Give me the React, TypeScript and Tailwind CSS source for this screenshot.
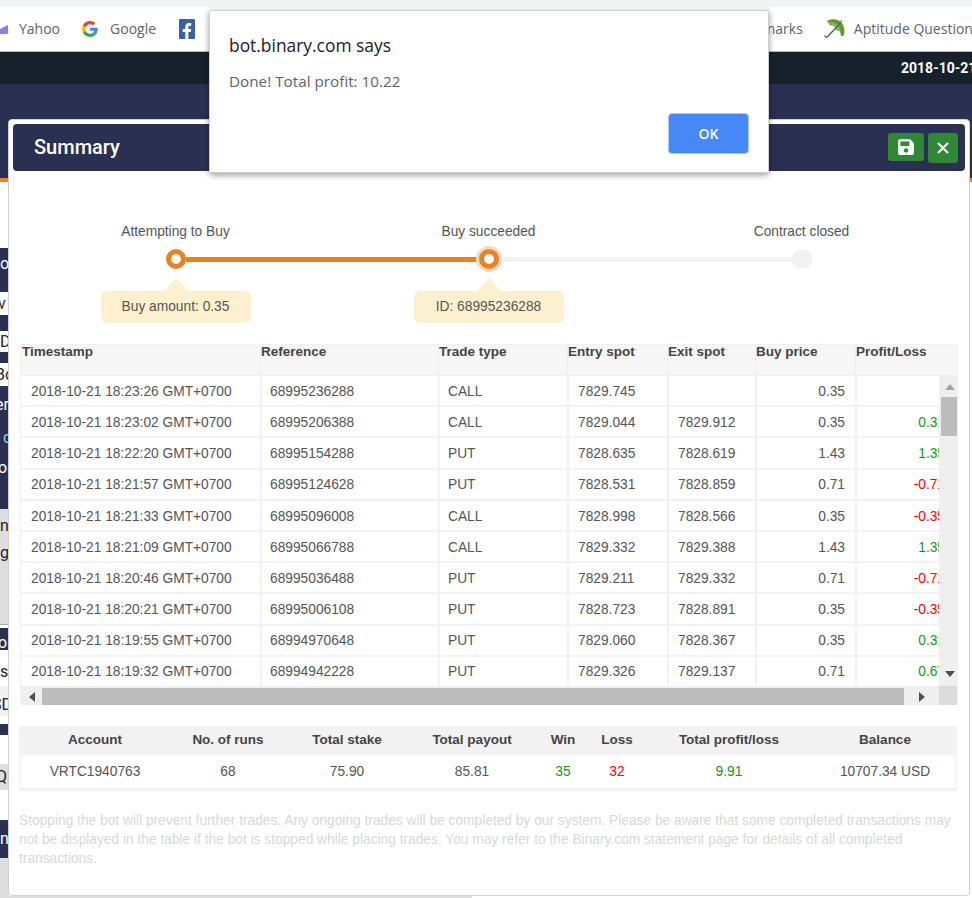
import React from "react";
import { FaSave, FaFacebookF } from "react-icons/fa";

const ROW_COLS = "grid grid-cols-[239px_178px_129px_100px_88px_100px_100px]";
const SUMMARY_COLS = "grid grid-cols-[150px_116px_122px_128px_54px_54px_170px_142px]";

type Trade = [string, string, string, string, string, string, string];

const trades: Trade[] = [
  ["2018-10-21 18:23:26 GMT+0700", "68995236288", "CALL", "7829.745", "", "0.35", ""],
  ["2018-10-21 18:23:02 GMT+0700", "68995206388", "CALL", "7829.044", "7829.912", "0.35", "0.31"],
  ["2018-10-21 18:22:20 GMT+0700", "68995154288", "PUT", "7828.635", "7828.619", "1.43", "1.35"],
  ["2018-10-21 18:21:57 GMT+0700", "68995124628", "PUT", "7828.531", "7828.859", "0.71", "-0.71"],
  ["2018-10-21 18:21:33 GMT+0700", "68995096008", "CALL", "7828.998", "7828.566", "0.35", "-0.35"],
  ["2018-10-21 18:21:09 GMT+0700", "68995066788", "CALL", "7829.332", "7829.388", "1.43", "1.35"],
  ["2018-10-21 18:20:46 GMT+0700", "68995036488", "PUT", "7829.211", "7829.332", "0.71", "-0.71"],
  ["2018-10-21 18:20:21 GMT+0700", "68995006108", "PUT", "7828.723", "7828.891", "0.35", "-0.35"],
  ["2018-10-21 18:19:55 GMT+0700", "68994970648", "PUT", "7829.060", "7828.367", "0.35", "0.31"],
  ["2018-10-21 18:19:32 GMT+0700", "68994942228", "PUT", "7829.326", "7829.137", "0.71", "0.67"],
];

const headers = ["Timestamp", "Reference", "Trade type", "Entry spot", "Exit spot", "Buy price", "Profit/Loss"];

// slices of the page that stick out left of the dialog
const strip: { h: string; bg: string; text?: React.ReactNode; color?: string; extra?: string }[] = [
  { h: "h-[66px]", bg: "bg-white" },
  { h: "h-[44px]", bg: "bg-[#2a3052]", text: "o", color: "text-white", extra: "pb-[12px]" },
  { h: "h-[23px]", bg: "bg-white", text: "v", color: "text-[#333]", extra: "-ml-[2px]" },
  { h: "h-[16px]", bg: "bg-[#2a3052]" },
  { h: "h-[21px]", bg: "bg-white", text: "D", color: "text-[#222]" },
  { h: "h-[11px]", bg: "bg-[#2a3052]" },
  { h: "h-[23px]", bg: "bg-white", text: "Bc", color: "text-[#222]", extra: "-ml-[5px]" },
  { h: "h-[38px]", bg: "bg-[#2a3052]", text: "er", color: "text-white", extra: "-ml-[5px]" },
  {
    h: "h-[28px]",
    bg: "bg-[#2a3052]",
    text: (
      <>
        <span className="w-[3px] h-[8px] bg-[#e98024]" />
        <span className="ml-[3px] text-[#8fd0f5]">c</span>
      </>
    ),
  },
  { h: "h-[57px]", bg: "bg-[#2a3052]", text: "or", color: "text-white", extra: "-ml-[2px] pb-[25px]" },
  { h: "h-[29px]", bg: "bg-[#dedede]", text: "n", color: "text-[#222]", extra: "pt-[4px]" },
  { h: "h-[28px]", bg: "bg-[#dedede]", text: "ge", color: "text-[#222]", extra: "pt-[2px]" },
  { h: "h-[58px]", bg: "bg-[#dedede]" },
  { h: "h-[4px]", bg: "bg-white border-t border-t-[#aaaaaa]" },
  { h: "h-[22px]", bg: "bg-[#2a3052]", text: "or", color: "text-white", extra: "-ml-[2px] pt-[8px]" },
  { h: "h-[36px]", bg: "bg-white", text: "s", color: "text-[#222]", extra: "pt-[8px]" },
  { h: "h-[30px]", bg: "bg-[#f1f1f1]", text: "SD", color: "text-[#222]", extra: "-ml-[8px] pt-[8px]" },
  { h: "h-[8px]", bg: "bg-white" },
  { h: "h-[11px]", bg: "bg-[#2a3052]" },
  { h: "h-[29px]", bg: "bg-white" },
  { h: "h-[26px]", bg: "bg-[#dedede]", text: "Q", color: "text-[#222]", extra: "-ml-[4px]" },
  { h: "h-[30px]", bg: "bg-white" },
  { h: "h-[38px]", bg: "bg-[#2a3052]", text: "n", color: "text-white" },
  { h: "h-[38px]", bg: "bg-[#dedede]" },
];

const GoogleIcon = () => (
  <svg width="16" height="16" viewBox="0 0 48 48" className="shrink-0">
    <path fill="#EA4335" d="M24 9.5c3.5 0 6.700 1.200 9.200 3.600l6.900-6.900C35.900 2.400 30.500 0 24 0 14.600 0 6.500 5.400 2.600 13.200l8 6.200C12.500 13.700 17.800 9.500 24 9.500z" />
    <path fill="#4285F4" d="M46.900 24.500c0-1.600-.1-3.100-.4-4.500H24v9h12.900c-.6 3-2.200 5.500-4.700 7.200l7.700 6c4.500-4.200 7-10.300 7-17.700z" />
    <path fill="#FBBC05" d="M10.600 28.600c-.5-1.400-.8-3-.8-4.600s.3-3.200.8-4.600l-8-6.200C.9 16.500 0 20.100 0 24s.9 7.500 2.600 10.800l8-6.200z" />
    <path fill="#34A853" d="M24 48c6.500 0 11.900-2.100 15.900-5.800l-7.700-6c-2.100 1.400-4.900 2.300-8.200 2.300-6.200 0-11.500-4.200-13.400-9.900l-8 6.200C6.500 42.600 14.600 48 24 48z" />
  </svg>
);

const MailIcon = () => (
  <svg width="8" height="12" viewBox="0 0 8 12" className="shrink-0">
    <path fill="#8f7cf0" d="M0 1h7q1 0 1 1v8q0 1-1 1H0z" />
    <path fill="#ffffff" d="M0 6 8 2V1H0z" />
  </svg>
);

const UmbrellaIcon = () => (
  <svg width="22" height="22" viewBox="0 0 22 22" className="shrink-0">
    <path fill="#5f9a35" d="M3 3C8 0 15 1 18 5c2 3 3 7 2 12-1 1-2 1-3 1l-1-5-4-1-2-4-4-1z" />
    <path fill="#8dbb52" d="M3 3l7 5 2 4 4 1-1-6z" />
    <path fill="none" stroke="#5a5a5a" strokeWidth="1.400" strokeLinecap="round" d="M14 8 5 17c-1 2-3 3-4 1" />
    <path fill="none" stroke="#5a5a5a" strokeWidth="1" d="M14 8l4-6" />
  </svg>
);

const Dot = ({ state }: { state: "done" | "active" | "todo" }) => {
  if (state === "todo") return <div className="w-5 h-5 rounded-full bg-[#f2f2f2] shrink-0" />;
  return (
    <div
      className={
        "w-5 h-5 rounded-full bg-white border-[5px] border-[#ec8122] shrink-0 " +
        (state === "active" ? "shadow-[0_0_0_3px_#f9d8bc]" : "")
      }
    />
  );
};

const Note = ({ text }: { text: string }) => (
  <div className="flex flex-col items-center">
    <div className="w-0 h-0 border-x-[12px] border-x-transparent border-b-[13px] border-b-[#fdf0cf]" />
    <div className="w-[150px] h-[32px] rounded-[6px] bg-[#fdf0cf] flex items-center justify-center text-[#555]">
      {text}
    </div>
  </div>
);

const Arrow = ({ dir }: { dir: "up" | "down" | "left" | "right" }) => {
  const pts = {
    up: "0,8 5,2 10,8",
    down: "0,2 10,2 5,8",
    left: "8,0 8,10 2,5",
    right: "2,0 2,10 8,5",
  }[dir];
  return (
    <svg width="10" height="10" viewBox="0 0 10 10">
      <polygon points={pts} fill={dir === "up" ? "#a3a3a3" : "#505050"} />
    </svg>
  );
};

export default function App() {
  return (
    <div className="relative w-[972px] h-[898px] overflow-hidden bg-white font-['Liberation_Sans',sans-serif] text-[13.75px]">
      {/* browser chrome */}
      <div className="h-[7px] bg-[#f1f3f4]" />
      <div className="h-[45px] bg-white border-b border-b-[#b9b9b9] flex items-center whitespace-nowrap overflow-hidden font-['Open_Sans',sans-serif] text-[14px] text-[#5f6368] pb-[1px]">
        <MailIcon />
        <span className="ml-[11px]">Yahoo</span>
        <span className="ml-[22px]"><GoogleIcon /></span>
        <span className="ml-[12px]">Google</span>
        <span className="ml-[23px] w-5 h-5 rounded-[1px] bg-[#3b5fa8] flex items-end justify-end text-white text-[16px]">
          <FaFacebookF />
        </span>
        <span className="ml-[534px]">Bookmarks</span>
        <span className="ml-[21px]"><UmbrellaIcon /></span>
        <span className="ml-[8px]">Aptitude Questions</span>
      </div>

      {/* page behind the dialog */}
      <div className="h-[32px] bg-[#16212b] flex items-center pl-[901px] whitespace-nowrap overflow-hidden font-['Roboto',sans-serif] font-bold text-[14px] text-white">
        2018-10-21 18:23:30
      </div>
      <div className="h-[94px] bg-[#2a3052]" />
      <div className="h-[4px] bg-[#ec8122]" />
      <div className="w-[9px] overflow-hidden flex flex-col">
        {strip.map((s, i) => (
          <div key={i} className={`${s.h} ${s.bg} ${s.color ?? ""} ${s.extra ?? ""} flex items-center whitespace-nowrap font-['Roboto',sans-serif] text-[16px]`}>
            {s.text}
          </div>
        ))}
      </div>
      <div className="w-[472px] h-[2px] bg-[#dedede]" />

      {/* summary dialog */}
      <div className="absolute left-[8px] top-[119px] w-[962px] h-[777px] p-[1px] bg-white border border-[#d2d2d2] rounded-[4px] flex flex-col text-[#555]">
        <div className="mx-[3px] mt-[3px] h-[47px] shrink-0 rounded-[4px] bg-[#2a3052] flex items-center pl-[21px] pr-[7px]">
          <span className="font-['Roboto',sans-serif] font-medium text-[20px] text-white pb-[2px]">Summary</span>
          <div className="ml-auto flex items-start gap-[4px] pt-[1px]">
            <button className="w-[36px] h-[28px] rounded-[3px] bg-[#2e8836] text-white text-[18px] flex items-center justify-center">
              <FaSave />
            </button>
            <button className="w-[30px] h-[30px] rounded-[3px] bg-[#2e8836] flex items-center justify-center">
              <svg width="12" height="12" viewBox="0 0 12 12">
                <path d="M1 1l10 10M11 1 1 11" stroke="#ffffff" strokeWidth="2" fill="none" />
              </svg>
            </button>
          </div>
        </div>
        <div className="ml-[3px] h-[22px] border-l border-l-[#f3f3f3] shrink-0" />

        {/* stepper */}
        <div className="grid grid-cols-[313px_313px_313px] ml-[9px] mt-[29px] h-[20px] leading-[20px] text-center">
          <span>Attempting to Buy</span>
          <span>Buy succeeded</span>
          <span>Contract closed</span>
        </div>
        <div className="flex items-center mt-[7px] ml-[156px] w-[646px]">
          <Dot state="done" />
          <div className="h-[5px] flex-1 bg-[#ec8122]" />
          <Dot state="active" />
          <div className="h-[5px] flex-1 bg-[#f2f2f2]" />
          <Dot state="todo" />
        </div>
        <div className="grid grid-cols-[313px_313px_313px] ml-[9px] mt-[9px] justify-items-center">
          <Note text="Buy amount: 0.35" />
          <Note text="ID: 68995236288" />
        </div>

        {/* trades table */}
        <div className="mt-[21px] ml-[10px] w-[938px] h-[361px] shrink-0 border border-[#f0f0f0] flex flex-col">
          <div className={`${ROW_COLS} h-[31px] shrink-0 bg-[#f7f7f7] border-b border-b-[#eeeeee] font-bold text-[13.5px] text-[#444] leading-[14px]`}>
            {headers.map((h, i) => (
              <div key={h} className={(i ? "border-l border-l-[#eeeeee] " : "pl-[1px] ") + "whitespace-nowrap"}>
                {h}
              </div>
            ))}
          </div>
          <div className="flex h-[310px]">
            <div className="w-[919px] overflow-hidden">
              {trades.map((t) => (
                <div key={t[1]} className={`${ROW_COLS} w-[934px] h-[31.2px] border-b-2 border-b-[#f2f2f2]`}>
                  {t.map((c, i) => (
                    <div
                      key={i}
                      className={
                        "flex items-center pt-[3px] whitespace-nowrap " +
                        (i === 0 ? "pl-[10px] " : "border-l-2 border-l-[#f2f2f2] ") +
                        (i >= 1 && i <= 2 ? "pl-[8px] " : "") +
                        (i >= 3 && i <= 4 ? "pl-[9px] " : "") +
                        (i >= 5 ? "justify-end pr-[10px] " : "") +
                        (i === 6 ? (c.startsWith("-") ? "text-[#ff0000]" : "text-[#109a10]") : "")
                      }
                    >
                      {c}
                    </div>
                  ))}
                </div>
              ))}
            </div>
            <div className="w-[18px] bg-[#efefef] flex flex-col items-center">
              <div className="h-[21px] ml-[3px] pt-[1px] flex items-center justify-center"><Arrow dir="up" /></div>
              <div className="w-[16px] h-[39px] ml-[2px] bg-[#bcbcbc]" />
              <div className="flex-1 ml-[3px] flex items-end justify-center pb-[7px]"><Arrow dir="down" /></div>
            </div>
          </div>
          <div className="flex h-[19px] shrink-0">
            <div className="w-[919px] bg-[#efefef] flex items-end">
              <div className="w-[21px] h-[17px] flex items-center justify-center"><Arrow dir="left" /></div>
              <div className="w-[862px] h-[17px] bg-[#bcbcbc]" />
              <div className="flex-1 h-[17px] flex items-center justify-center"><Arrow dir="right" /></div>
            </div>
            <div className="w-[18px] bg-[#dcdcdc]" />
          </div>
        </div>

        {/* totals */}
        <div className="mt-[21px] ml-[9px] w-[938px] shrink-0 border-x border-x-[#f2f2f2] border-b-[3px] border-b-[#f2f2f2]">
          <div className={`${SUMMARY_COLS} h-[29px] bg-[#f2f2f2] items-center text-center font-bold text-[13.5px] text-[#444]`}>
            <span>Account</span>
            <span>No. of runs</span>
            <span>Total stake</span>
            <span>Total payout</span>
            <span>Win</span>
            <span>Loss</span>
            <span>Total profit/loss</span>
            <span>Balance</span>
          </div>
          <div className={`${SUMMARY_COLS} h-[33px] pt-[2px] items-center text-center`}>
            <span>VRTC1940763</span>
            <span>68</span>
            <span>75.90</span>
            <span>85.81</span>
            <span className="text-[#109a10]">35</span>
            <span className="text-[#ff0000]">32</span>
            <span className="text-[#109a10]">9.91</span>
            <span>10707.34 USD</span>
          </div>
        </div>

        <p className="mt-[20px] ml-[9px] w-[938px] leading-[19px] text-[#d8d8d8]">
          Stopping the bot will prevent further trades. Any ongoing trades will be completed by our system. Please be aware that some completed transactions may not be displayed in the table if the bot is stopped while placing trades. You may refer to the Binary.com statement page for details of all completed transactions.
        </p>
        <div className="ml-[3px] mt-auto mb-[2px] h-[27px] border-l border-l-[#f3f3f3]" />
      </div>

      {/* browser alert */}
      <div className="absolute left-[209px] top-[10px] w-[560px] h-[163px] bg-white rounded-[2px] border border-[#d0d0d0] shadow-[0_2px_6px_rgba(0,0,0,0.4)] flex flex-col pl-[19px] pr-[19px] font-['Open_Sans',sans-serif]">
        <div className="mt-[23px] text-[17.4px] leading-[22px] text-[#202124]">bot.binary.com says</div>
        <div className="mt-[15px] text-[15.25px] leading-[20px] text-[#5f6368]">Done! Total profit: 10.22</div>
        <button className="mt-[22px] ml-auto w-[81px] h-[41px] rounded-[4px] bg-[#4688f8] border border-[#aac8fb] text-white text-[14px] font-semibold">
          OK
        </button>
      </div>
    </div>
  );
}
